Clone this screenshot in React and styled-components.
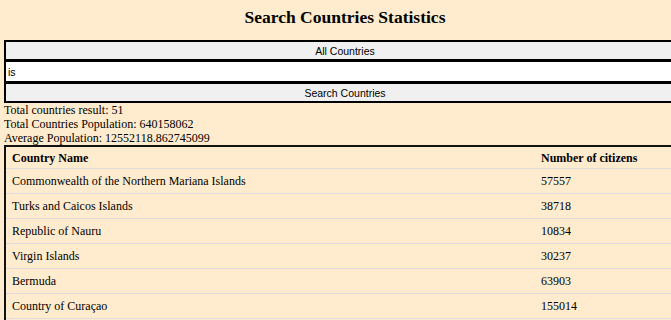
import React, { useState } from 'react';
import styled, { createGlobalStyle } from 'styled-components';

const GlobalStyle = createGlobalStyle`
  html, body {
    margin: 0;
    padding: 0;
    background: #ffebcd;
    overflow: hidden;
  }
  body {
    font-family: "Liberation Serif", "Times New Roman", serif;
    color: #000;
  }
`;

const Page = styled.div`
  padding: 0 0 0 4px;
  width: 682px;
`;

const Title = styled.h3`
  margin: 0;
  padding: 7px 0 0;
  height: 40px;
  box-sizing: border-box;
  text-align: center;
  font-size: 17.5px;
  font-weight: bold;
`;

const Controls = styled.div`
  display: flex;
  flex-direction: column;
`;

const Button = styled.button`
  display: block;
  width: 100%;
  height: 21px;
  margin: 0;
  padding: 0;
  background: #f0f0f0;
  border: 2px solid #000;
  font-family: "Liberation Sans", Arial, sans-serif;
  font-size: 10.5px;
  color: #000;
  cursor: pointer;
`;

const Input = styled.input`
  display: block;
  width: 100%;
  height: 21px;
  margin: 0;
  padding: 0 2px;
  box-sizing: border-box;
  background: #fff;
  border: 2px solid #000;
  border-top-width: 1px;
  border-bottom-width: 1px;
  font-family: "Liberation Sans", Arial, sans-serif;
  font-size: 10.5px;
  outline: none;
`;

const Stats = styled.div`
  font-size: 12px;
  line-height: 14px;
`;

const Table = styled.table`
  width: 100%;
  border-collapse: collapse;
  border: 2px solid #111;
  font-size: 12px;
`;

const Cell = styled.td`
  padding: ${(p) => (p.$head ? '4px 6px 3px' : '5px 6px')};
  height: 14px;
  border-bottom: 1px solid #ddd;
  text-align: left;
  width: ${(p) => p.$w || 'auto'};
  font-weight: ${(p) => (p.$head ? 'bold' : 'normal')};
  line-height: 14px;
`;

const rows = [
  ['Commonwealth of the Northern Mariana Islands', 57557],
  ['Turks and Caicos Islands', 38718],
  ['Republic of Nauru', 10834],
  ['Virgin Islands', 30237],
  ['Bermuda', 63903],
  ['Country of Curaçao', 155014],
  ['Republic of Iceland', 366425],
];

export default function App() {
  const [query, setQuery] = useState('is');
  return (
    <>
      <GlobalStyle />
      <Page>
        <Title>Search Countries Statistics</Title>
        <Controls>
          <Button>All Countries</Button>
          <Input value={query} onChange={(e) => setQuery(e.target.value)} />
          <Button>Search Countries</Button>
        </Controls>
        <Stats>
          <div>Total countries result: 51</div>
          <div>Total Countries Population: 640158062</div>
          <div>Average Population: 12552118.862745099</div>
        </Stats>
        <Table>
          <thead>
            <tr>
              <Cell as="th" $head $w="517px">Country Name</Cell>
              <Cell as="th" $head>Number of citizens</Cell>
            </tr>
          </thead>
          <tbody>
            {rows.map(([name, count]) => (
              <tr key={name}>
                <Cell>{name}</Cell>
                <Cell>{count}</Cell>
              </tr>
            ))}
          </tbody>
        </Table>
      </Page>
    </>
  );
}
